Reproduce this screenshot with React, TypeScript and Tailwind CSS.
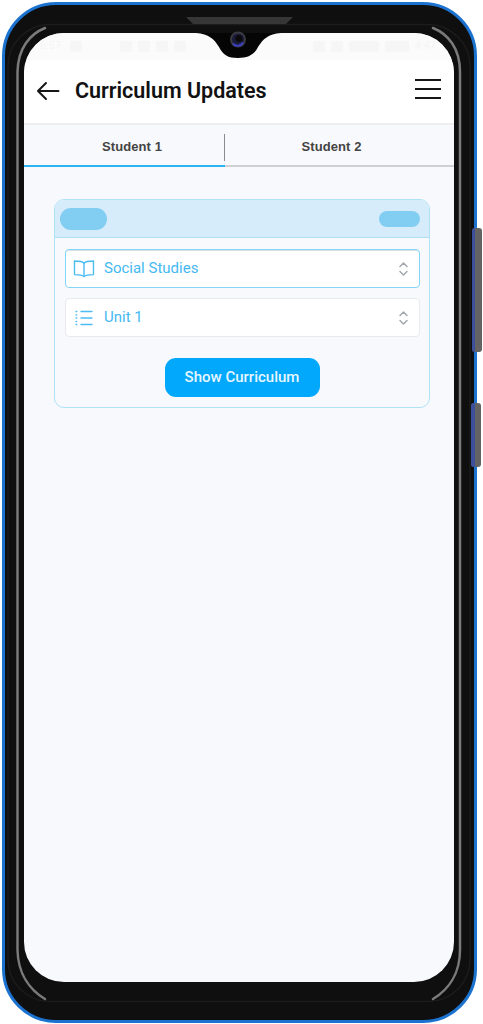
import React from "react";

const font = { fontFamily: '"Roboto","Liberation Sans",sans-serif' };

function Chevrons() {
  return (
    <svg width="9" height="16" viewBox="0 0 9 16" fill="none" stroke="#a3a7ad" strokeWidth="1.5" strokeLinecap="round" strokeLinejoin="round">
      <path d="M1 5.500 4.500 2 8 5.500" />
      <path d="M1 10.500 4.500 14 8 10.500" />
    </svg>
  );
}

function Book() {
  return (
    <svg width="22" height="18" viewBox="0 0 22 18" fill="none" stroke="#4dbcf2" strokeWidth="1.4" strokeLinejoin="round" strokeLinecap="round">
      <path d="M11 3.200C9.500 1.600 7 1 1.500 1v13.600c5 0 8 .4 9.500 2 1.500-1.600 4.500-2 9.500-2V1C15 1 12.500 1.600 11 3.200Z" />
      <path d="M11 3.200V16.600" />
    </svg>
  );
}

function ListIcon() {
  return (
    <svg width="18" height="16" viewBox="0 0 18 16" fill="none" stroke="#4dbcf2" strokeWidth="1.3" strokeLinecap="round">
      <path d="M6 1.500h11M6 8h11M6 14.500h11" />
      <path d="M1 1.500h.8M1 5h.6M1 8h.8M1 11.500h.6M1 14.500h.8" />
    </svg>
  );
}

function Select({ icon, label, active }: { icon: React.ReactNode; label: string; active?: boolean }) {
  return (
    <div
      className={
        "flex h-[39px] items-center rounded-[4px] bg-white pl-[7px] pr-[11px] " +
        (active
          ? "border-[1.500px] border-[#84d6f8] shadow-[inset_0_1px_0_rgba(90,130,150,0.25)]"
          : "border-[1.500px] border-[#e8eaef]")
      }
    >
      <span className="flex w-[31px] items-center justify-start">{icon}</span>
      <span className="flex-1 text-[15px] font-normal text-[#45b9f2]">{label}</span>
      <Chevrons />
    </div>
  );
}

function Faint({ w = 12 }: { w?: number }) {
  return <span className="h-[11px] rounded-[2px] bg-[#f6f6f6]" style={{ width: w }} />;
}

export default function App() {
  return (
    <div className="relative h-[1024px] w-[483px] overflow-hidden bg-white" style={font}>
      {/* phone body */}
      <div className="ml-[2px] mt-[2px] h-[1021px] w-[475px] rounded-[54px] border-[3px] border-[#1c73cf] bg-[#0f0f0f] pl-[19px] pt-[28px]">
        <div className="flex h-[949px] w-[430px] flex-col overflow-hidden rounded-[40px] bg-[#f8f9fd]">
          <div className="flex h-[27px] shrink-0 items-center justify-between bg-[#fbfbfb] pl-[16px] pr-[18px] text-[11px] text-[#f5f5f5]">
            <div className="flex items-center gap-[6px]">
              <span className="mr-[3px]">6:57</span>
              <Faint />
              <span className="w-[26px]" />
              <Faint />
              <Faint />
              <Faint />
              <Faint />
            </div>
            <div className="flex items-center gap-[6px]">
              <Faint />
              <Faint />
              <Faint w={30} />
              <Faint w={24} />
              <span>4:47</span>
            </div>
          </div>
          <div className="flex h-[63px] shrink-0 items-center bg-white pl-[12px] pr-[13px]">
            <svg className="mb-[1px]" width="24" height="20" viewBox="0 0 24 20" fill="none" stroke="#161616" strokeWidth="2" strokeLinecap="round" strokeLinejoin="round">
              <path d="M22.500 10H2M10 2 2 10l8 8" />
            </svg>
            <h1 className="mb-[1px] ml-[15px] flex-1 text-[21.500px] font-semibold leading-none text-[#111111]">Curriculum Updates</h1>
            <div className="mb-[6px] flex h-[20px] w-[26px] flex-col justify-between">
              <span className="h-[2px] bg-[#161616]" />
              <span className="h-[2px] bg-[#161616]" />
              <span className="h-[2px] bg-[#161616]" />
            </div>
          </div>
          <div className="flex h-[44px] shrink-0 border-t-2 border-[#eeeef0]" style={{ fontFamily: '"Liberation Sans",sans-serif' }}>
            <div className="relative flex w-[201px] items-center justify-center border-b-2 border-[#29b6f0] pl-[15px] pt-[3px] text-[13px] font-bold tracking-[0.1px] text-[#444444]">
              Student 1
              <span className="absolute right-0 top-[9px] h-[27px] w-[1.500px] bg-[#8b8b8b]" />
            </div>
            <div className="flex flex-1 items-center justify-center border-b-2 border-[#cfd0d4] pr-[16px] pt-[3px] text-[13px] font-bold tracking-[0.1px] text-[#444444]">
              Student 2
            </div>
          </div>
          <div className="ml-[30px] mr-[24px] mt-[32px] overflow-hidden rounded-[10px] border-[1.500px] border-[#aee2f7]">
            <div className="flex h-[38px] items-center justify-between border-b-[1.500px] border-[#aedff5] bg-[#d6ecfb] pl-[5px] pr-[9px]">
              <span className="h-[22px] w-[47px] rounded-full bg-[#82cdf2]" />
              <span className="h-[16px] w-[41px] rounded-full bg-[#82cdf2]" />
            </div>
            <div className="flex flex-col gap-[10px] pl-[10px] pr-[9px] pt-[11px]">
              <Select icon={<Book />} label="Social Studies" active />
              <Select icon={<span className="pl-[2px]"><ListIcon /></span>} label="Unit 1" />
            </div>
            <div className="flex justify-center pb-[10px] pt-[21px]">
              <button className="flex h-[39px] w-[155px] items-center justify-center rounded-[11px] bg-[#02a8fb] text-[15px] font-medium text-[#e6f6ff]">
                Show Curriculum
              </button>
            </div>
          </div>
        </div>
      </div>

      {/* frame decoration: speaker, notch, camera, sheen */}
      <svg className="pointer-events-none absolute left-0 top-0" width="483" height="1024" viewBox="0 0 483 1024" fill="none">
        <rect x="8" y="24.500" width="462" height="977" rx="42" stroke="#1d1b1c" strokeWidth="1.500" />
        <path d="M186 17H293L286 24H193Z" fill="#363636" />
        <path d="M196 33H281C268 34 263 39 258 47C254 55 248 58 238 58C228 58 223 55 219 47C214 39 209 34 196 33Z" fill="#050505" />
        <circle cx="238" cy="39.500" r="8" fill="#3a3a40" />
        <circle cx="238" cy="39.500" r="6" fill="#1a1a3a" />
        <path d="M233 43.500a6 6 0 0 0 10 -1" stroke="#3b3fc0" strokeWidth="2" />
        <circle cx="239" cy="38.500" r="3.500" fill="#0a0a0c" />
        <g stroke="#7a7a7a" strokeWidth="2.500" strokeLinecap="round">
          <path d="M45 28C30 34 18 48 17.500 72V950C18 974 30 990 45 999" />
          <path d="M433 28C448 34 460 48 460 72V950C460 974 448 990 433 999" />
        </g>
      </svg>

      {/* side buttons */}
      <div className="absolute left-[472px] top-[228px] h-[124px] w-[10px] rounded-[3px] bg-[#636363]">
        <div className="h-full w-[3px] rounded-l-[3px] bg-[#3c4f9c]" />
      </div>
      <div className="absolute left-[471px] top-[403px] h-[64px] w-[10px] rounded-[3px] bg-[#636363]">
        <div className="h-full w-[4px] rounded-l-[3px] bg-[#3c4f9c]" />
      </div>
    </div>
  );
}
